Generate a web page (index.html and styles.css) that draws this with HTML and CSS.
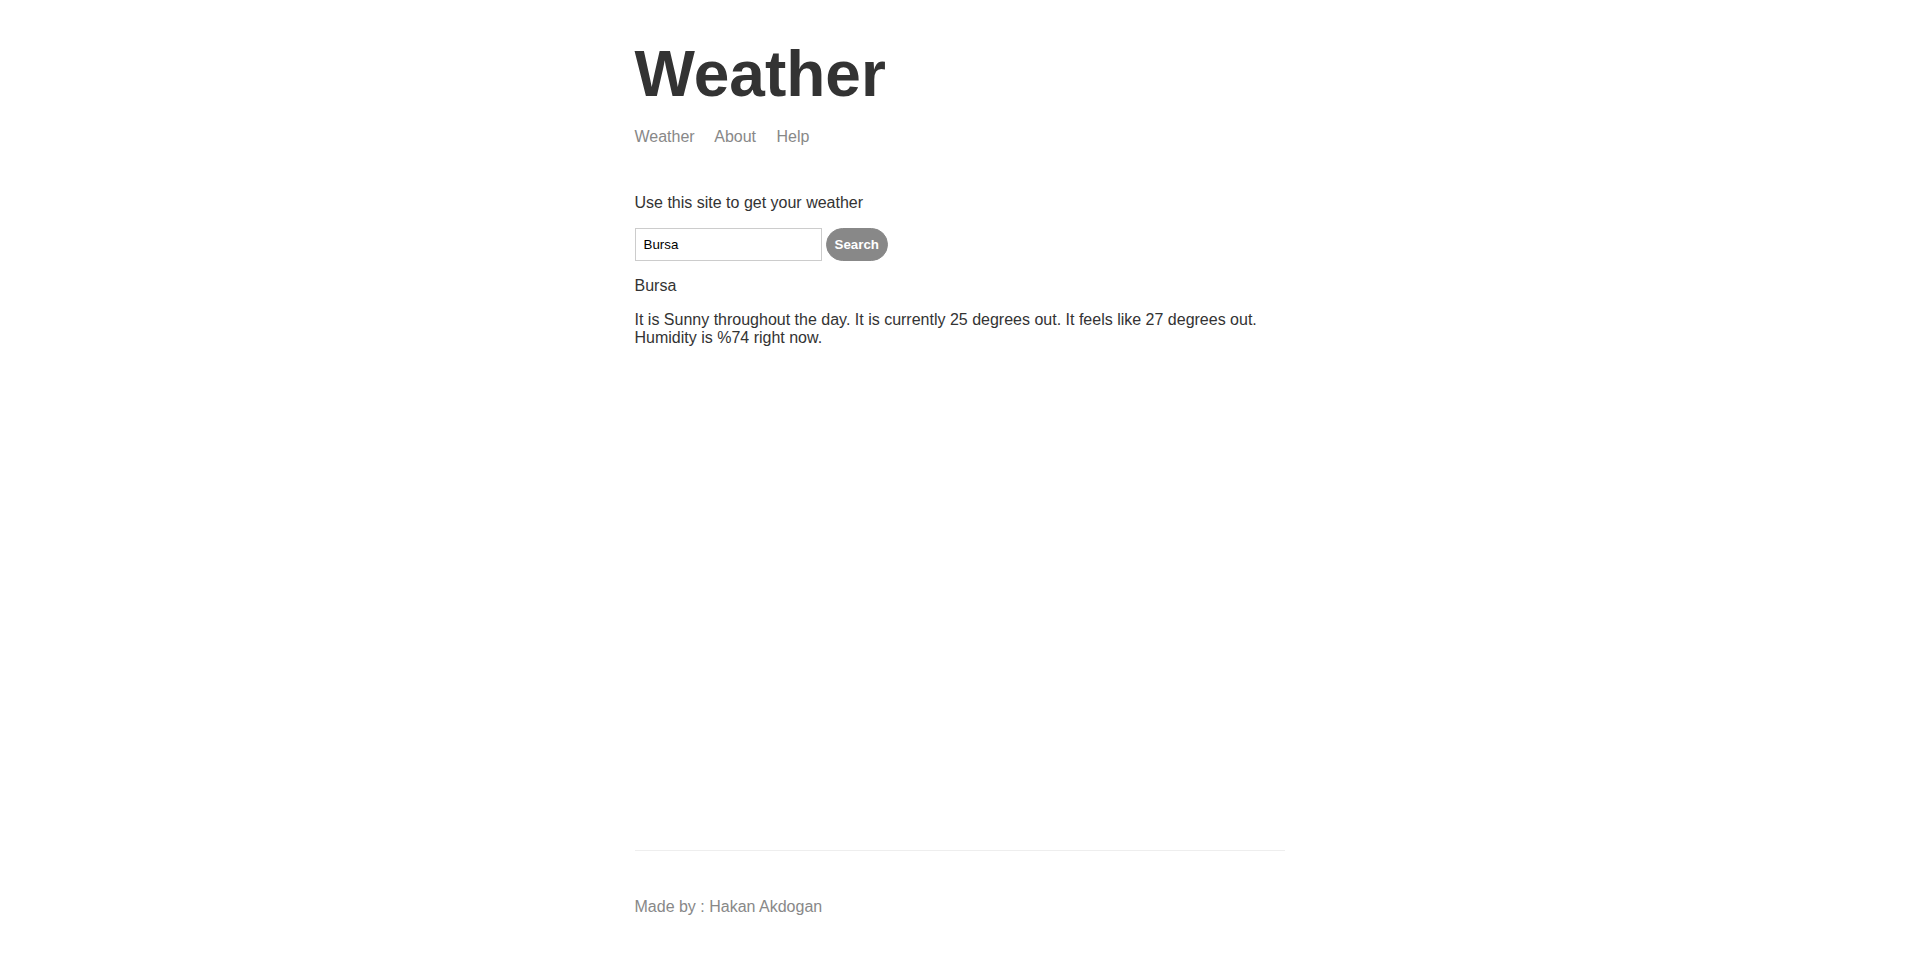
FILE: index.html
```html
<!DOCTYPE html>
<html lang="en">
<head>
  <meta charset="utf-8">
  <title>Weather</title>
  <link rel="stylesheet" href="styles.css">
</head>
<body>
  <div class="main-content">
    <header>
      <h1>Weather</h1>
      <nav>
        <a href="#">Weather</a>
        <a href="#">About</a>
        <a href="#">Help</a>
      </nav>
    </header>

    <p>Use this site to get your weather</p>

    <form class="search-form">
      <input type="text" placeholder="Location" value="Bursa">
      <button type="button">Search</button>
    </form>

    <p class="location">Bursa</p>
    <p class="forecast">It is Sunny throughout the day. It is currently 25 degrees out. It feels like 27 degrees out. Humidity is %74 right now.</p>
  </div>

  <footer>
    <p>Made by : Hakan Akdogan</p>
  </footer>
</body>
</html>
```

FILE: styles.css
```css
* {
  box-sizing: border-box;
}

body {
  color: #333333;
  font-family: "Liberation Sans", Arial, sans-serif;
  font-size: 16px;
  max-width: 682px;
  margin: 0 auto;
  padding: 0 16px;
  display: flex;
  flex-direction: column;
  min-height: 100vh;
}

.main-content {
  flex-grow: 1;
}

header {
  margin-top: 16px;
  margin-bottom: 48px;
}

h1 {
  font-size: 64px;
  margin: 37px 0 17px;
}

header a {
  color: #888888;
  margin-right: 16px;
  text-decoration: none;
}

p {
  margin: 16px 0;
}

.search-form {
  display: flex;
  align-items: center;
  gap: 4px;
}

input {
  width: 187px;
  height: 33px;
  border: 1px solid #cccccc;
  padding: 8px;
  font-family: "Liberation Sans", Arial, sans-serif;
  font-size: 13.33px;
  color: #000000;
}

button {
  cursor: pointer;
  height: 33px;
  border: 1px solid #888888;
  border-radius: 17px;
  background: #888888;
  color: #ffffff;
  padding: 0 8px;
  font-family: "Liberation Sans", Arial, sans-serif;
  font-size: 13.33px;
  font-weight: bold;
}

footer {
  color: #888888;
  border-top: 1px solid #eeeeee;
  margin-top: 16px;
  padding: 31px 0 29px;
}
```
